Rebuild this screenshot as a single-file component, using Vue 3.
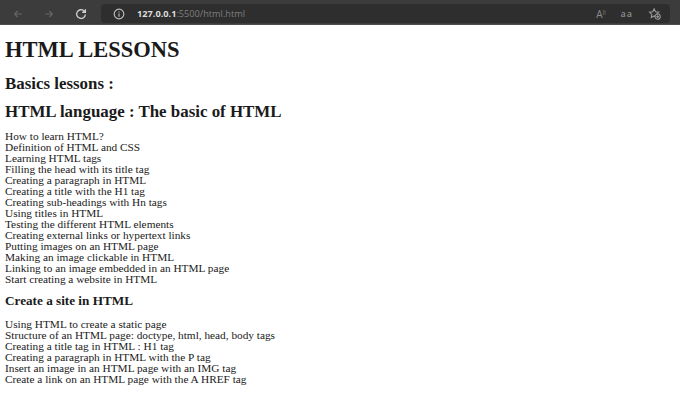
<script setup>
const basics = [
  'How to learn HTML?',
  'Definition of HTML and CSS',
  'Learning HTML tags',
  'Filling the head with its title tag',
  'Creating a paragraph in HTML',
  'Creating a title with the H1 tag',
  'Creating sub-headings with Hn tags',
  'Using titles in HTML',
  'Testing the different HTML elements',
  'Creating external links or hypertext links',
  'Putting images on an HTML page',
  'Making an image clickable in HTML',
  'Linking to an image embedded in an HTML page',
  'Start creating a website in HTML'
]
const site = [
  'Using HTML to create a static page',
  'Structure of an HTML page: doctype, html, head, body tags',
  'Creating a title tag in HTML : H1 tag',
  'Creating a paragraph in HTML with the P tag',
  'Insert an image in an HTML page with an IMG tag',
  'Create a link on an HTML page with the A HREF tag'
]
</script>

<template>
  <div class="page">
    <header class="chrome">
      <div class="toolbar">
        <div class="nav">
          <svg class="icon dim" viewBox="0 0 16 16"><path d="M13 8H3.500M7.500 4 3.500 8l4 4" /></svg>
          <svg class="icon dim" viewBox="0 0 16 16"><path d="M3 8h9.500M8.500 4l4 4-4 4" /></svg>
          <svg class="icon reload" viewBox="0 0 16 16"><path d="M13 8.500a5 5 0 1 1-1.800-4.300L13 6M13 2.500V6H9.500" /></svg>
        </div>
        <div class="address">
          <div class="url">
            <svg class="info" viewBox="0 0 16 16"><circle cx="8" cy="8" r="5.500" /><path d="M8 7.500V11M8 5v1.200" /></svg>
            <span class="host">127.0.0.1</span><span class="rest">:5500/html.html</span>
          </div>
          <div class="tools">
            <span class="read">A<sup>))</sup></span>
            <span class="translate">aa</span>
            <svg class="fav" viewBox="0 0 16 16"><path d="M7 2l1.600 3.400 3.700.5-2.700 2.500.7 3.600L7 10.200l-3.300 1.800.7-3.600L1.700 5.900l3.700-.5z" /><circle cx="11" cy="11" r="3" class="badge" /><path d="M9.500 11h3M11 9.500v3" /></svg>
          </div>
        </div>
      </div>
    </header>
    <main class="doc">
      <h1>HTML LESSONS</h1>
      <h2>Basics lessons :</h2>
      <h2>HTML language : The basic of HTML</h2>
      <div class="list">
        <div v-for="line in basics" :key="line">{{ line }}</div>
      </div>
      <h3>Create a site in HTML</h3>
      <div class="list">
        <div v-for="line in site" :key="line">{{ line }}</div>
      </div>
    </main>
  </div>
</template>

<style>
html, body { margin: 0; background: #fff; }
</style>

<style scoped>
.page {
  width: 680px;
  height: 411px;
  overflow: hidden;
  background: #fff;
  color: #1a1a1a;
  font-family: "Liberation Serif", serif;
}
.chrome {
  height: 25px;
  box-sizing: border-box;
  padding-top: 4px;
  background: #3c3c3c;
  border-bottom: 1px solid #4e4e4e;
}
.toolbar {
  display: flex;
  align-items: center;
  height: 19px;
}
.nav {
  display: flex;
  align-items: center;
  gap: 19px;
  width: 101px;
  box-sizing: border-box;
  padding-left: 12px;
}
.icon {
  width: 12px;
  height: 12px;
  fill: none;
  stroke: #d0d0d0;
  stroke-width: 1.500;
}
.icon.dim { stroke: #666; }
.icon.reload { width: 14px; height: 14px; }
.address {
  flex: 1;
  height: 19px;
  margin-right: 10px;
  display: flex;
  align-items: center;
  justify-content: space-between;
  background: #2e2e2e;
  border-radius: 4px;
  font-family: "Open Sans", sans-serif;
}
.url {
  display: flex;
  align-items: center;
  padding-left: 11px;
  font-size: 9.200px;
}
.info {
  width: 14px;
  height: 14px;
  margin-right: 11px;
  fill: none;
  stroke: #c0c0c0;
  stroke-width: 1.300;
}
.host { color: #dcdcdc; font-weight: 700; }
.rest { color: #7e7e7e; }
.tools {
  display: flex;
  align-items: center;
  gap: 15px;
  padding-right: 8px;
  color: #8c8c8c;
  font-size: 10px;
  line-height: 14px;
}
.read sup { font-size: 5px; line-height: 0; }
.translate { font-weight: 600; letter-spacing: 1px; font-size: 9px; }
.fav {
  width: 14px;
  height: 14px;
  fill: none;
  stroke: #9a9a9a;
  stroke-width: 1.200;
}
.badge { fill: #2e2e2e; }
.doc { padding: 0 5px; }
h1 {
  margin: 12px 0 13px;
  font-size: 22.500px;
  line-height: 25px;
}
h2 {
  margin: 10px 0 0;
  font-size: 16.900px;
  line-height: 18px;
}
h3 {
  margin: 9px 0 0;
  font-size: 13.200px;
  line-height: 14px;
}
.list {
  margin-top: 10px;
  font-size: 11.300px;
  line-height: 11px;
}
h3 + .list { margin-top: 11px; }
</style>
